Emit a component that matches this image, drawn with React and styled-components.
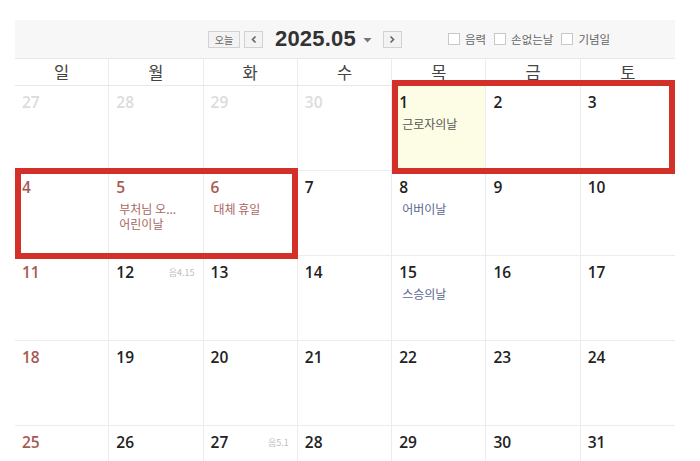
import React from "react"
import styled, { createGlobalStyle } from "styled-components"

const GlobalStyle = createGlobalStyle`
  body {
    margin: 0;
    background: #fff;
    font-family: "Noto Sans CJK KR", "Noto Sans", sans-serif;
  }
`

const weeks = [
  [
    { d: 27, dim: true },
    { d: 28, dim: true },
    { d: 29, dim: true },
    { d: 30, dim: true },
    { d: 1, today: true, events: [{ t: "근로자의날" }] },
    { d: 2 },
    { d: 3 },
  ],
  [
    { d: 4, holiday: true },
    { d: 5, holiday: true, events: [{ t: "부처님 오...", h: true }, { t: "어린이날", h: true }] },
    { d: 6, holiday: true, events: [{ t: "대체 휴일", h: true }] },
    { d: 7 },
    { d: 8, events: [{ t: "어버이날", blue: true }] },
    { d: 9 },
    { d: 10 },
  ],
  [
    { d: 11 },
    { d: 12, lunar: "4.15" },
    { d: 13 },
    { d: 14 },
    { d: 15, events: [{ t: "스승의날", blue: true }] },
    { d: 16 },
    { d: 17 },
  ],
  [{ d: 18 }, { d: 19 }, { d: 20 }, { d: 21 }, { d: 22 }, { d: 23 }, { d: 24 }],
  [{ d: 25 }, { d: 26 }, { d: 27, lunar: "5.1" }, { d: 28 }, { d: 29 }, { d: 30 }, { d: 31 }],
]

const dayNames = ["일", "월", "화", "수", "목", "금", "토"]

const App = () => {
  return (
    <>
      <GlobalStyle />
      <Page>
        <Toolbar>
          <Nav>
            <SmallButton>오늘</SmallButton>
            <SmallButton $arrow>
              <svg width="8" height="9" viewBox="0 0 8 9">
                <path d="M5.5 1.5 L2.5 4.5 L5.5 7.5" fill="none" stroke="#666" strokeWidth="1.6" />
              </svg>
            </SmallButton>
            <Title>2025.05</Title>
            <Caret>
              <svg width="9" height="6" viewBox="0 0 9 6">
                <path d="M0.5 1 L8.5 1 L4.5 5.5 Z" fill="#777" />
              </svg>
            </Caret>
            <SmallButton $arrow $gap>
              <svg width="8" height="9" viewBox="0 0 8 9">
                <path d="M2.5 1.5 L5.5 4.5 L2.5 7.5" fill="none" stroke="#666" strokeWidth="1.6" />
              </svg>
            </SmallButton>
          </Nav>
          <Options>
            <Option>
              <Box />
              음력
            </Option>
            <Option>
              <Box />
              손없는날
            </Option>
            <Option>
              <Box />
              기념일
            </Option>
          </Options>
        </Toolbar>
        <HeaderRow>
          {dayNames.map((n, i) => (
            <DayName key={n} $last={i === 6}>
              {n}
            </DayName>
          ))}
        </HeaderRow>
        <Grid>
          {weeks.map((week, r) =>
            week.map((c, i) => (
              <Cell key={`${r}-${i}`} $row={r + 1} $col={i + 1} $today={c.today} $last={i === 6}>
                <CellTop>
                  <DateNum $dim={c.dim} $red={!c.dim && (i === 0 || c.holiday)}>
                    {c.d}
                  </DateNum>
                  {c.lunar && <Lunar>음{c.lunar}</Lunar>}
                </CellTop>
                {c.events && (
                  <Events>
                    {c.events.map((e) => (
                      <EventText key={e.t} $holiday={e.h} $blue={e.blue}>
                        {e.t}
                      </EventText>
                    ))}
                  </Events>
                )}
              </Cell>
            ))
          )}
          <Highlight $row={1} $from={5} $to={8} $top={-6} />
          <Highlight $row={2} $from={1} $to={4} $top={-3} />
        </Grid>
      </Page>
    </>
  )
}

export default App

const Page = styled.div`
  width: 660px;
  padding: 20px 0 0 15px;
  height: 441px;
  overflow: hidden;
`

const Toolbar = styled.div`
  height: 39px;
  background: #f7f7f7;
  border-bottom: 1px solid #e8e8e8;
  display: flex;
  align-items: center;
  box-sizing: border-box;
  padding-left: 193px;
`

const Nav = styled.div`
  display: flex;
  align-items: center;
`

const SmallButton = styled.div`
  height: 17px;
  min-width: ${(p) => (p.$arrow ? "19px" : "32px")};
  box-sizing: border-box;
  border: 1px solid #d2d2d2;
  background: #f3f3f3;
  color: #666;
  font-size: 10px;
  display: flex;
  align-items: center;
  justify-content: center;
  margin-right: 4px;
  margin-left: ${(p) => (p.$gap ? "11px" : "0")};
`

const Title = styled.div`
  font-family: "Liberation Sans", Arial, sans-serif;
  font-size: 22px;
  font-weight: 700;
  color: #333;
  margin-left: 8px;
  letter-spacing: 0.2px;
`

const Caret = styled.div`
  display: flex;
  align-items: center;
  margin-left: 7px;
  padding-top: 2px;
`

const Options = styled.div`
  display: flex;
  align-items: center;
  margin-left: 42px;
  gap: 8px;
`

const Option = styled.label`
  display: flex;
  align-items: center;
  gap: 5px;
  font-size: 11.5px;
  color: #666;
`

const Box = styled.span`
  width: 12px;
  height: 12px;
  box-sizing: border-box;
  border: 1px solid #c8c8c8;
  background: #fff;
`

const HeaderRow = styled.div`
  display: grid;
  grid-template-columns: repeat(7, 1fr);
  height: 26px;
  border-bottom: 1px solid #e8e8e8;
`

const DayName = styled.div`
  display: flex;
  align-items: center;
  justify-content: center;
  font-size: 16.5px;
  color: #444;
  border-right: ${(p) => (p.$last ? "none" : "1px solid #ececec")};
`

const Grid = styled.div`
  display: grid;
  grid-template-columns: repeat(7, 1fr);
  grid-auto-rows: 85px;
`

const Cell = styled.div`
  grid-row: ${(p) => p.$row};
  grid-column: ${(p) => p.$col};
  background: ${(p) => (p.$today ? "#fdfde6" : "#fff")};
  border-right: ${(p) => (p.$last ? "none" : "1px solid #ececec")};
  border-bottom: 1px solid #ececec;
  padding: 5px 8px 0 7px;
  box-sizing: border-box;
`

const CellTop = styled.div`
  display: flex;
  justify-content: space-between;
  align-items: center;
`

const DateNum = styled.span`
  font-family: "Open Sans", "Noto Sans", sans-serif;
  font-size: 15.5px;
  font-weight: 600;
  color: ${(p) => (p.$dim ? "#dcdcdc" : p.$red ? "#a65a52" : "#222")};
`

const Lunar = styled.span`
  font-size: 9px;
  color: #bdbdbd;
`

const Events = styled.div`
  display: flex;
  flex-direction: column;
  padding: 3px 0 0 3px;
`

const EventText = styled.span`
  font-size: 12px;
  line-height: 15px;
  color: ${(p) => (p.$holiday ? "#a8675f" : p.$blue ? "#5b6690" : "#555")};
`

const Highlight = styled.div`
  grid-row: ${(p) => p.$row};
  grid-column: ${(p) => p.$from} / ${(p) => p.$to};
  border: 6px solid #d3302a;
  margin: ${(p) => p.$top}px 0 -3px 0;
  pointer-events: none;
  z-index: 1;
`
